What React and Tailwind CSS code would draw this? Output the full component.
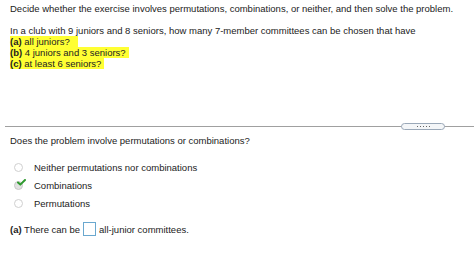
import React from "react";

function Radio({ checked }) {
  return (
    <span className="relative inline-block w-[9px] h-[9px] shrink-0">
      <span className={"absolute inset-0 rounded-full border " + (checked ? "border-[#c8c8c8] bg-[#e2e2e2]" : "border-[#d0d0d0] bg-white")} />
      {checked && (
        <svg className="absolute left-[3px] top-[-2px]" width="9" height="7" viewBox="0 0 9 7">
          <path d="M1 3.5 L3.3 5.6 L8 1" fill="none" stroke="#2e9a2e" strokeWidth="2" strokeLinecap="round" strokeLinejoin="round" />
        </svg>
      )}
    </span>
  );
}

export default function App() {
  return (
    <div className="w-[474px] h-[270px] bg-white overflow-hidden text-[#222] text-[9.5px] leading-[11px] whitespace-nowrap" style={{ fontFamily: '"Liberation Sans", Arial, sans-serif' }}>
      <div className="pt-[3px] pl-[10px]">
        <p>Decide whether the exercise involves permutations, combinations, or neither, and then solve the problem.</p>
        <p className="mt-[11px]">In a club with 9 juniors and 8 seniors, how many 7-member committees can be chosen that have</p>
        <div className="flex flex-col items-start">
          <span className="bg-[#ffff33] pr-[8px]"><b>(a)</b> all juniors?</span>
          <span className="bg-[#ffff33] pr-[3px]"><b>(b)</b> 4 juniors and 3 seniors?</span>
          <span className="bg-[#ffff33] pr-[3px]"><b>(c)</b> at least 6 seniors?</span>
        </div>
      </div>
      <div className="relative mt-[57px] ml-[5px] h-[1px] bg-[#a0a0a0]">
        <div className="absolute left-[396px] top-[-3px] w-[44px] h-[7px] rounded-full border border-[#9aa8b8] bg-[#f4f6f8] flex items-center justify-center gap-[2px]">
          <span className="w-[1px] h-[1px] bg-[#666]" />
          <span className="w-[1px] h-[1px] bg-[#666]" />
          <span className="w-[1px] h-[1px] bg-[#666]" />
          <span className="w-[1px] h-[1px] bg-[#666]" />
          <span className="w-[1px] h-[1px] bg-[#666]" />
        </div>
      </div>
      <div className="pl-[10px]">
        <p className="mt-[8px]">Does the problem involve permutations or combinations?</p>
        <div className="mt-[16px] flex flex-col gap-[7px] pl-[4px]">
          <div className="flex items-center gap-[11px]"><Radio /><span>Neither permutations nor combinations</span></div>
          <div className="flex items-center gap-[11px]"><Radio checked /><span>Combinations</span></div>
          <div className="flex items-center gap-[11px]"><Radio /><span>Permutations</span></div>
        </div>
        <div className="mt-[13px] flex items-center">
          <span><b>(a)</b> There can be</span>
          <span className="ml-[3px] mr-[3px] w-[13px] h-[14px] border border-[#6aa8cf] bg-white inline-block" />
          <span>all-junior committees.</span>
        </div>
      </div>
    </div>
  );
}
